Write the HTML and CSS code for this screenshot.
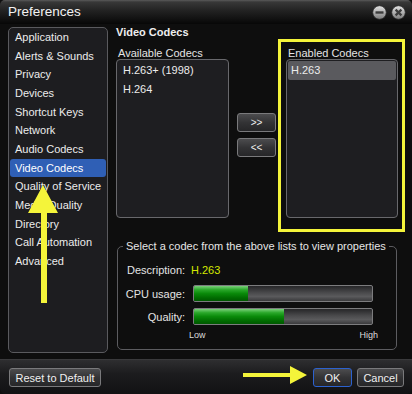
FILE: index.html
```html
<!DOCTYPE html>
<html>
<head>
<meta charset="utf-8">
<title>Preferences</title>
<link rel="stylesheet" href="styles.css">
</head>
<body>
<div class="window">
  <div class="titlebar">
    <span class="title">Preferences</span>
    <div class="winbtns">
      <svg class="wbtn" width="15" height="15" viewBox="0 0 15 15">
        <defs>
          <linearGradient id="g1" x1="0" y1="0" x2="0" y2="1">
            <stop offset="0" stop-color="#e4e4e4"/>
            <stop offset="1" stop-color="#7a7a7a"/>
          </linearGradient>
        </defs>
        <circle cx="7.5" cy="7.5" r="6.8" fill="url(#g1)" stroke="#2a2a2a" stroke-width="0.8"/>
        <rect x="3.5" y="6.3" width="8" height="2.4" fill="#3c3c3c"/>
      </svg>
      <svg class="wbtn" width="15" height="15" viewBox="0 0 15 15">
        <circle cx="7.5" cy="7.5" r="6.8" fill="url(#g1)" stroke="#2a2a2a" stroke-width="0.8"/>
        <path d="M4.6 4.6 L10.4 10.4 M10.4 4.6 L4.6 10.4" stroke="#3c3c3c" stroke-width="2.2"/>
      </svg>
    </div>
  </div>

  <div class="main">
    <ul class="nav">
      <li>Application</li>
      <li>Alerts &amp; Sounds</li>
      <li>Privacy</li>
      <li>Devices</li>
      <li>Shortcut Keys</li>
      <li>Network</li>
      <li>Audio Codecs</li>
      <li class="active">Video Codecs</li>
      <li>Quality of Service</li>
      <li>Media Quality</li>
      <li>Directory</li>
      <li>Call Automation</li>
      <li>Advanced</li>
    </ul>

    <div class="content">
      <div class="heading">Video Codecs</div>
      <div class="codecs">
        <div class="col avail">
          <div class="label">Available Codecs</div>
          <ul class="list">
            <li>H.263+ (1998)</li>
            <li>H.264</li>
          </ul>
        </div>
        <div class="movebtns">
          <button class="btn small">&gt;&gt;</button>
          <button class="btn small">&lt;&lt;</button>
        </div>
        <div class="col enabled">
          <div class="label">Enabled Codecs</div>
          <ul class="list">
            <li class="sel">H.263</li>
          </ul>
        </div>
      </div>

      <fieldset class="props">
        <legend>Select a codec from the above lists to view properties</legend>
        <div class="desc"><span class="dlabel">Description:</span><span class="dval">H.263</span></div>
        <div class="meters">
          <span class="mlabel">CPU usage:</span>
          <div class="bar"><div class="fill" style="width:30.5%"></div></div>
          <span class="mlabel">Quality:</span>
          <div class="bar"><div class="fill" style="width:50.5%"></div></div>
          <span></span>
          <div class="scale"><span>Low</span><span>High</span></div>
        </div>
      </fieldset>
    </div>
  </div>

  <div class="footer">
    <button class="btn reset">Reset to Default</button>
    <div class="spacer"></div>
    <button class="btn ok">OK</button>
    <button class="btn cancel">Cancel</button>
  </div>

  <svg class="arrow-up" width="32" height="120" viewBox="0 0 32 120">
    <polygon points="13,118 19,118 19,28 30,28 15,0 0,28 13,28" fill="#f4f43a"/>
  </svg>
  <svg class="arrow-right" width="66" height="20" viewBox="0 0 66 20">
    <polygon points="0,7 47,7 47,0 64,9 47,18 47,11 0,11" fill="#f4f43a"/>
  </svg>
</div>
</body>
</html>
```

FILE: styles.css
```css
* { box-sizing: border-box; }
html, body { margin: 0; padding: 0; background: #0b0b0b; }
body { font-family: "Liberation Sans", Arial, sans-serif; color: #e6e6e6; }

.window {
  position: relative;
  width: 412px;
  height: 394px;
  display: flex;
  flex-direction: column;
  background: #0e0e0e;
  overflow: hidden;
}

.titlebar {
  height: 24px;
  flex: none;
  display: flex;
  align-items: center;
  padding: 0 6px 0 8px;
  background: linear-gradient(#5a5a5a 0, #383838 2px, #222 45%, #070707 100%);
  border-radius: 5px 5px 0 0;
}
.title { font-size: 13.5px; color: #f2f2f2; flex: 1; padding-bottom: 1px; }
.winbtns { display: flex; gap: 4px; }
.wbtn { display: block; }

.main {
  flex: 1;
  display: flex;
  gap: 8px;
  padding: 1px 0 0 8px;
  min-height: 0;
}

.nav {
  list-style: none;
  margin: 2px 0 0 0;
  padding: 0;
  width: 100px;
  height: 326px;
  background: #1d1d20;
  border: 1px solid #5a5a5e;
  border-radius: 5px;
  font-size: 11px;
}
.nav li {
  height: 18.67px;
  line-height: 18.67px;
  padding-left: 5px;
  margin: 0 1px;
  color: #ececec;
  white-space: nowrap;
}
.nav li.active {
  background: #2f5fb5;
  border-radius: 3px;
  color: #ffffff;
}

.content {
  flex: 1;
  display: flex;
  flex-direction: column;
  padding-right: 7px;
}
.heading {
  height: 14px;
  line-height: 14px;
  font-weight: bold;
  font-size: 11px;
  color: #eeeeee;
}

.codecs {
  display: flex;
  height: 193px;
}
.col { display: flex; flex-direction: column; }
.avail { width: 113px; padding-top: 8px; }
.label { height: 12px; line-height: 12px; font-size: 11px; color: #e4e4e4; padding-left: 2px; }
.list {
  list-style: none;
  margin: 0;
  padding: 1px 1px 0;
  height: 159px;
  background: #1e1e21;
  border: 1px solid #68686c;
  border-radius: 4px;
  font-size: 11px;
}
.list li {
  height: 19px;
  line-height: 19px;
  padding-left: 5px;
  color: #ececec;
}
.list li.sel { background: #5a5a5e; border-radius: 2px; padding-left: 3px; }

.movebtns {
  width: 39px;
  margin: 0 2px 0 8px;
  padding-top: 74px;
  display: flex;
  flex-direction: column;
  gap: 6px;
}

.btn {
  font-family: "Liberation Sans", Arial, sans-serif;
  font-size: 11px;
  color: #f0f0f0;
  height: 19px;
  padding: 0;
  background: linear-gradient(#4c4c4e, #333335 50%, #262628);
  border: 1px solid #7a7a7c;
  border-radius: 3px;
}
.btn.small { width: 39px; font-size: 10px; }

.enabled {
  width: 127px;
  border: 3px solid #f4f43a;
  padding: 5px 4px 0 5px;
}

.props {
  margin: 8px 8px 0 1px;
  padding: 0 0 0 9px;
  height: 110px;
  border: 1px solid #5c5c60;
  border-radius: 5px;
  min-width: 0;
}
.props legend {
  font-size: 11px;
  color: #e6e6e6;
  padding: 0 3px;
  margin-left: -4px;
  line-height: 13px;
  white-space: nowrap;
}
.desc { display: flex; height: 16px; margin-top: 9px; align-items: center; font-size: 11px; }
.dlabel { width: 64px; color: #e4e4e4; }
.dval { color: #d4e800; }

.meters {
  display: grid;
  grid-template-columns: 62px 180px;
  column-gap: 8px;
  row-gap: 6px;
  margin-top: 7px;
  margin-left: -4px;
  font-size: 11px;
  align-items: center;
}
.mlabel { text-align: right; color: #e4e4e4; white-space: nowrap; }
.bar {
  height: 17px;
  border: 1px solid #7c7c7e;
  border-radius: 2px;
  background: linear-gradient(#262628, #4a4a4c 45%, #5a5a5c 70%, #3a3a3c);
  overflow: hidden;
}
.fill {
  height: 100%;
  background: linear-gradient(#7ad07a 0, #2aa82a 25%, #0a8a0a 50%, #006a00 80%, #005800);
}
.scale {
  display: flex;
  justify-content: space-between;
  font-size: 9px;
  color: #dddddd;
  margin: -1px -5px 0 -4px;
  height: 11px;
  line-height: 11px;
}

.footer {
  height: 35px;
  flex: none;
  display: flex;
  align-items: flex-start;
  gap: 5px;
  padding: 8px 8px 0 9px;
  background: linear-gradient(#2e2e30, #1c1c1e 40%, #121214);
  border-top: 1px solid #3a3a3c;
  border-radius: 0 0 6px 6px;
}
.spacer { flex: 1; }
.reset { width: 92px; }
.ok { width: 39px; border-color: #2c62d0; }
.cancel { width: 47px; }

.arrow-up { position: absolute; left: 28px; top: 185px; }
.arrow-right { position: absolute; left: 243px; top: 366px; }
```
